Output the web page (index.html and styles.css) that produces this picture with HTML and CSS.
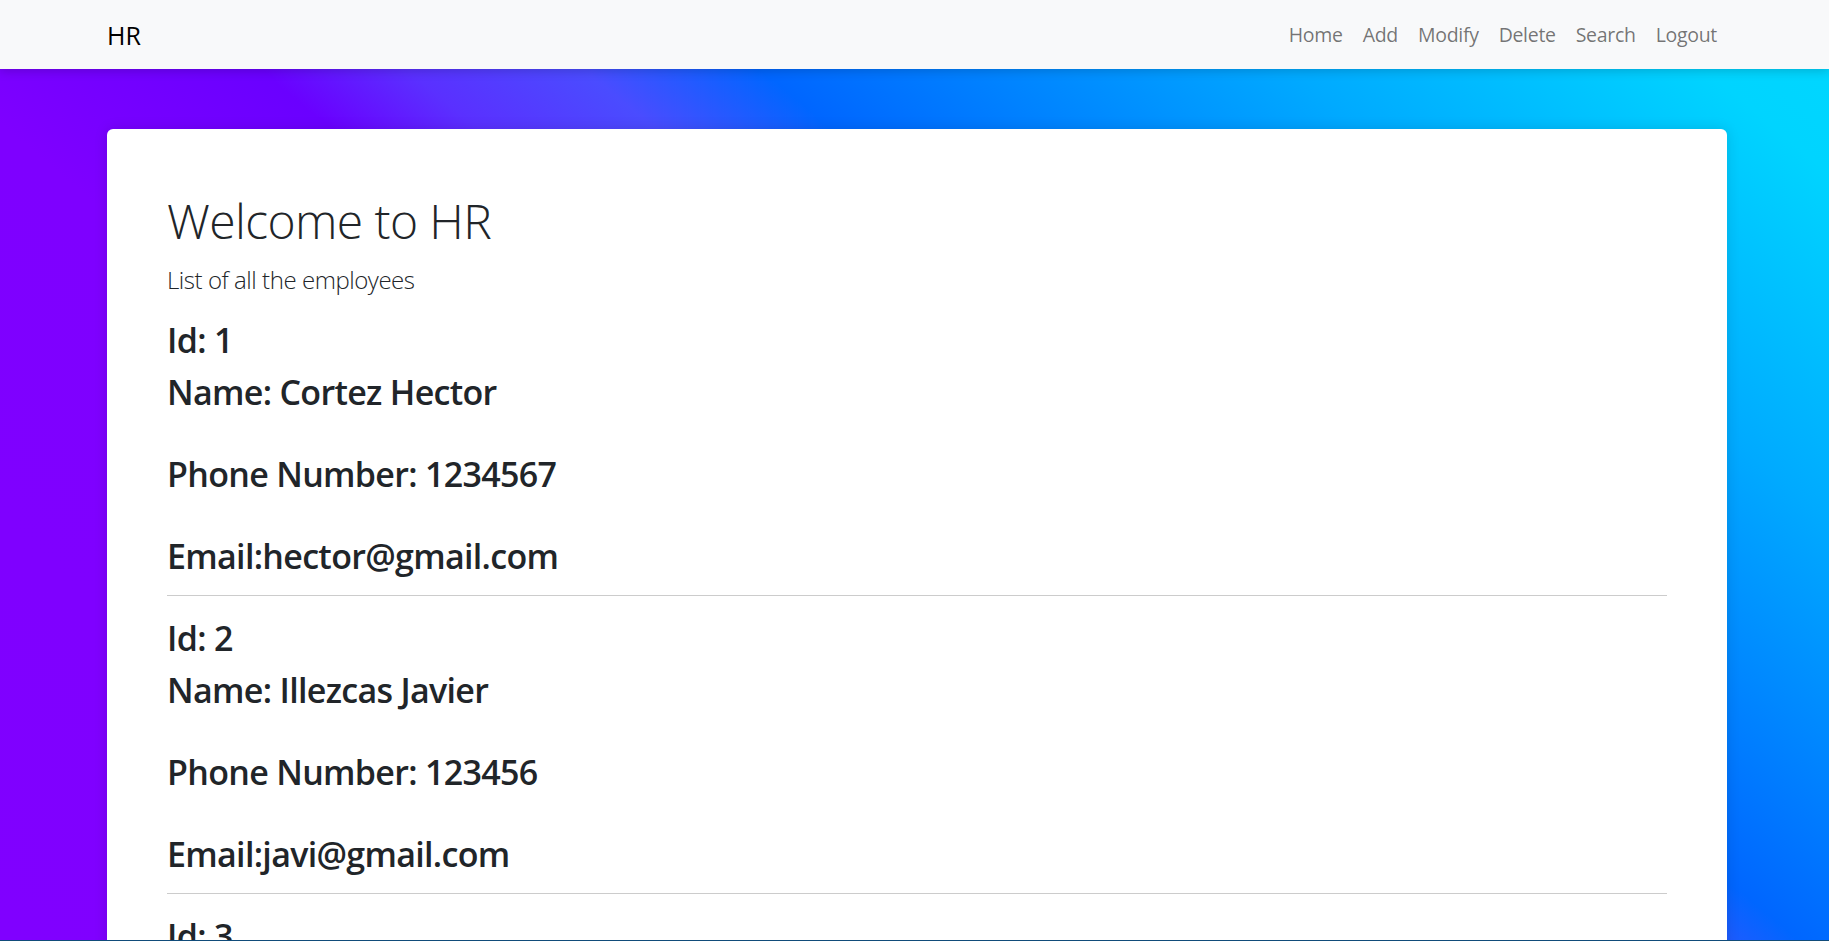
FILE: index.html
```html
<!DOCTYPE html>
<html lang="en">
<head>
<meta charset="utf-8">
<title>HR</title>
<link rel="stylesheet" href="styles.css">
</head>
<body>
<nav class="navbar">
  <div class="nav-inner">
    <a class="brand" href="#">HR</a>
    <ul class="nav-links">
      <li><a href="#">Home</a></li>
      <li><a href="#">Add</a></li>
      <li><a href="#">Modify</a></li>
      <li><a href="#">Delete</a></li>
      <li><a href="#">Search</a></li>
      <li><a href="#">Logout</a></li>
    </ul>
  </div>
</nav>
<main class="main">
  <section class="card">
    <h1 class="title">Welcome to HR</h1>
    <p class="lead">List of all the employees</p>

    <div class="employee">
      <h3 class="field">Id: 1</h3>
      <h3 class="field">Name: Cortez Hector</h3>
      <div class="gap"></div>
      <h3 class="field">Phone Number: 1234567</h3>
      <div class="gap"></div>
      <h3 class="field">Email:hector@gmail.com</h3>
    </div>
    <hr class="rule">

    <div class="employee">
      <h3 class="field">Id: 2</h3>
      <h3 class="field">Name: Illezcas Javier</h3>
      <div class="gap"></div>
      <h3 class="field">Phone Number: 123456</h3>
      <div class="gap"></div>
      <h3 class="field">Email:javi@gmail.com</h3>
    </div>
    <hr class="rule">

    <div class="employee">
      <h3 class="field">Id: 3</h3>
    </div>
  </section>
</main>
<div class="window-edge"></div>
</body>
</html>
```

FILE: styles.css
```css
* { box-sizing: border-box; }

html, body {
  margin: 0;
  padding: 0;
}

body {
  font-family: "Open Sans", "Noto Sans", "Liberation Sans", sans-serif;
  font-size: 20px;
  line-height: 1.5;
  color: #212529;
  background: linear-gradient(40deg, #8000ff 0%, #7e00ff 33%, #6a00ff 44%, #5a30ff 49%, #4a4cff 55%, #0066ff 61%, #0088ff 70%, #00aaff 79%, #00d4ff 93%, #00d8ff 100%);
  background-attachment: fixed;
  min-height: 100vh;
}

.navbar {
  position: relative;
  z-index: 2;
  height: 69px;
  background: #f8f9fa;
  box-shadow: 0 2px 10px rgba(0, 0, 0, 0.18);
}

.nav-inner {
  height: 100%;
  margin-left: 107px;
  width: 1620px;
  display: flex;
  align-items: center;
  justify-content: space-between;
}

.brand {
  font-size: 25px;
  line-height: 1;
  color: #000;
  text-decoration: none;
  margin-top: 1px;
}

.nav-links {
  list-style: none;
  margin: 0;
  padding: 0;
  display: flex;
}

.nav-links a {
  display: block;
  padding: 0 10px;
  font-size: 19.5px;
  letter-spacing: -0.3px;
  color: rgba(0, 0, 0, 0.55);
  text-decoration: none;
}

.main {
  padding-top: 60px;
  padding-left: 107px;
}

.card {
  width: 1620px;
  background: #fff;
  border-radius: 6px;
  padding: 62px 60px 60px;
  box-shadow: 0 0 14px rgba(0, 0, 0, 0.12);
}

.title {
  margin: 0 0 10px;
  font-size: 48px;
  font-weight: 300;
  letter-spacing: -0.6px;
  line-height: 60px;
}

.lead {
  margin: 0 0 20px;
  font-size: 24px;
  font-weight: 300;
  letter-spacing: -0.45px;
  line-height: 37.5px;
}

.field {
  margin: 0 0 10px;
  font-size: 34px;
  font-weight: 600;
  letter-spacing: -0.68px;
  line-height: 42px;
}

.gap {
  height: 30px;
}

.rule {
  margin: 18px 0 21px;
  border: 0;
  border-top: 1px solid rgba(0, 0, 0, 0.2);
}

.window-edge {
  position: fixed;
  left: 0;
  right: 0;
  bottom: 0;
  height: 1px;
  background: #114c7a;
}
```
